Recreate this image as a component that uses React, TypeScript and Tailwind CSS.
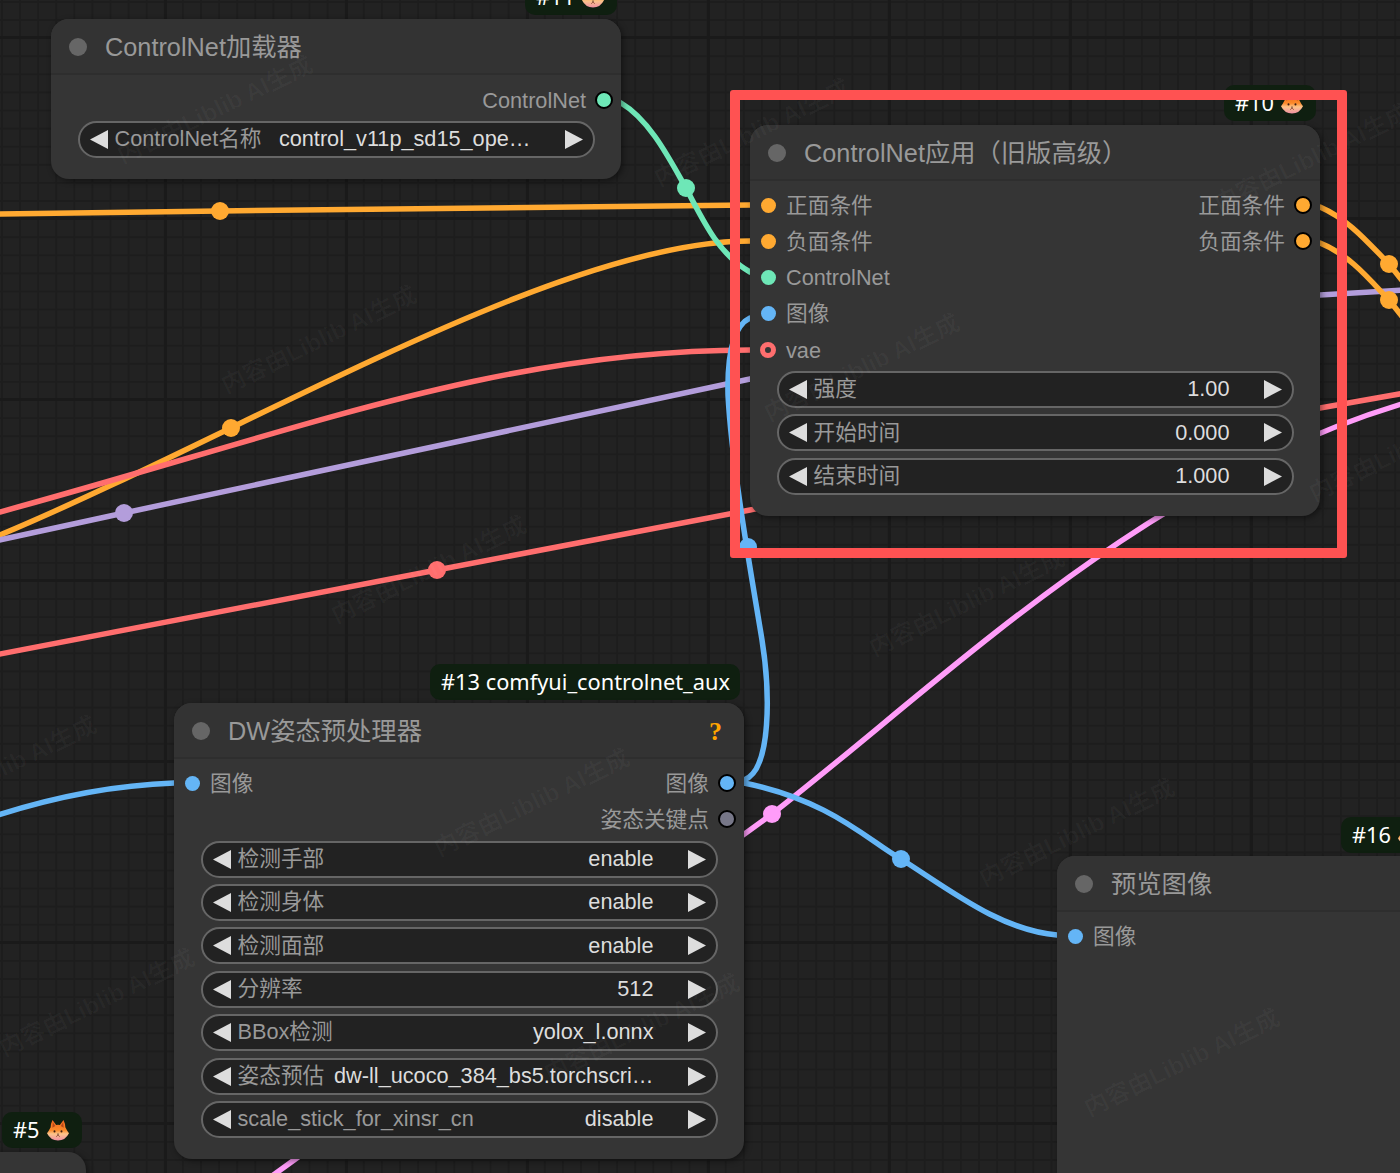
const sans = "font-['Liberation_Sans','Noto_Sans_CJK_SC',sans-serif]"
const noto = "font-['Noto_Sans','Noto_Sans_CJK_SC',sans-serif]"

function Fox({ className }: { className: string }) {
  return (
    <svg viewBox="0 0 24 24" className={className}>
      <defs>
        <linearGradient id="foxFace" x1="0" y1="0" x2="0" y2="1">
          <stop offset="0" stopColor="#f0661e" />
          <stop offset="0.5" stopColor="#fb8a2a" />
          <stop offset="0.68" stopColor="#fcc48a" />
          <stop offset="1" stopColor="#ef8fa4" />
        </linearGradient>
      </defs>
      <path d="M6 1 L10 6.5 Q12 6 14 6.5 L18 1 Q20 5 20 9 Q22 13 24 15.5 Q20 23.5 12 23.5 Q4 23.5 0 15.5 Q2 13 4 9 Q4 5 6 1 Z" fill="url(#foxFace)" />
      <path d="M6.4 3.5 L9 7.5 L5.8 9.5 Z M17.6 3.5 L15 7.5 L18.2 9.5 Z" fill="#b8481a" />
      <circle cx="8.2" cy="13.5" r="1.1" fill="#3b1d12" />
      <circle cx="15.8" cy="13.5" r="1.1" fill="#3b1d12" />
      <path d="M10.8 16.2 H13.2 L12 17.4 Z" fill="#3b1d12" />
      <path d="M10 19.3 L12 17.6 L14 19.3" stroke="#7a3a2a" strokeWidth="0.8" fill="none" />
    </svg>
  )
}

function Arrow({ right }: { right?: boolean }) {
  return (
    <svg viewBox="0 0 18 19" className="w-[18px] h-[19px] shrink-0">
      <polygon points={right ? '0,0 18,9.5 0,19' : '18,0 0,9.5 18,19'} fill="#ddd" />
    </svg>
  )
}

function Widget({ label, value, gap }: { label: string; value: string; gap?: boolean }) {
  return (
    <div className="flex items-center h-[37px] rounded-full border-2 border-[#666] bg-[#222] pl-[10px] pr-[10px] text-[21.7px] whitespace-nowrap">
      <Arrow />
      <span className="ml-[7px] text-[#999]">{label}</span>
      <span className={`flex-1 text-right text-[#ddd] mr-[34px] ${gap ? 'ml-[9px]' : ''}`}>{value}</span>
      <Arrow right />
    </div>
  )
}

function Dot({ color, output, ring }: { color: string; output?: boolean; ring?: boolean }) {
  if (ring) {
    return (
      <div className={`w-[16px] h-[16px] rounded-full border-[5px] ${color} bg-[#353535] shrink-0`} />
    )
  }
  return (
    <div className={`rounded-full shrink-0 ${color} ${output ? 'w-[18px] h-[18px] border-2 border-black' : 'w-[15px] h-[15px]'}`} />
  )
}

function Input({ color, label, ring }: { color: string; label: string; ring?: boolean }) {
  return (
    <div className="flex items-center h-[36.2px] pl-[10px]">
      <div className="w-[16px] flex justify-center">
        <Dot color={color} ring={ring} />
      </div>
      <span className="ml-[11px] pt-[2px] -translate-x-[1px] text-[21.7px] text-[#999]">{label}</span>
    </div>
  )
}

function Output({ color, label }: { color: string; label: string }) {
  return (
    <div className="flex items-center justify-end h-[36.2px] pr-[8px]">
      <span className="mr-[9px] pt-[2px] text-[21.7px] text-[#999]">{label}</span>
      <div className="w-[18px] flex justify-center">
        <Dot color={color} output />
      </div>
    </div>
  )
}

function Title({ text, help }: { text: string; help?: boolean }) {
  return (
    <div className="flex items-center h-[56px] shrink-0 pt-[2px] pl-[18px] pr-[22px] bg-[#333] border-b-2 border-[#2e2e2e] rounded-t-[18px]">
      <div className="w-[18px] h-[18px] rounded-full bg-[#666]" />
      <span className="ml-[18px] pt-[2px] text-[25.3px] text-[#999] whitespace-nowrap">{text}</span>
      {help && <span className="ml-auto font-['Liberation_Serif',serif] font-bold text-[26px] text-[#ffa500]">?</span>}
    </div>
  )
}

function Badge({ className, text, fox }: { className: string; text: string; fox?: string }) {
  return (
    <div className={`absolute flex items-center gap-[7px] h-[36px] rounded-[10px] bg-[#0f1f10] text-white text-[21.8px] whitespace-nowrap ${noto} ${className}`}>
      <span>{text}</span>
      {fox && <Fox className={fox} />}
    </div>
  )
}

const watermarks = [
  'left-[108px] top-[92px]',
  'left-[212px] top-[322px]',
  'left-[322px] top-[552px]',
  'left-[-108px] top-[752px]',
  'left-[860px] top-[585px]',
  'left-[755px] top-[350px]',
  'left-[645px] top-[115px]',
  'left-[1205px] top-[140px]',
  'left-[425px] top-[785px]',
  'left-[970px] top-[815px]',
  'left-[-10px] top-[985px]',
  'left-[535px] top-[1010px]',
  'left-[1075px] top-[1045px]',
  'left-[1300px] top-[430px]',
]

function Wires() {
  const w = { fill: 'none', strokeWidth: 5.5, strokeLinecap: 'round' as const }
  return (
    <svg viewBox="0 0 1400 1173" className="absolute inset-0 w-[1400px] h-[1173px]">
      <path {...w} stroke="#FFA931" d="M-5,214 L220,211 L750,205" />
      <path {...w} stroke="#FFA931" d="M0,535 C250,430 560,241 750,241" />
      <path {...w} stroke="#FF6E6E" d="M0,512 C300,430 500,350 750,350" />
      <path {...w} stroke="#B39DDB" d="M-5,541 L124,513 L750,379 C950,340 1150,300 1320,295 L1405,290" />
      <path {...w} stroke="#FF6E6E" d="M-5,655 L437,570 L750,510 C950,470 1150,435 1320,408 L1405,393" />
      <path {...w} stroke="#FF9CF9" d="M272,1176 L772,814 C950,675 1145,480 1405,403" />
      <path {...w} stroke="#64B5F6" d="M744,780 C772,770 770,690 762,640 S732,470 728,395 C727,350 735,325 750,318" />
      <path {...w} stroke="#64B5F6" d="M744,783 C830,800 870,842 901,859 C950,890 1000,930 1057,935" />
      <path {...w} stroke="#64B5F6" d="M-5,816 C60,795 120,785 174,783" />
      <path {...w} stroke="#6EE7B7" d="M621,103 C650,120 670,160 686,188 C705,225 720,255 750,272" />
      <path {...w} stroke="#FFA931" d="M1320,207 C1350,220 1370,245 1389,264 L1405,284" />
      <path {...w} stroke="#FFA931" d="M1320,243 C1350,255 1370,280 1389,300 L1405,320" />
      <circle cx="220" cy="211" r="9" fill="#FFA931" />
      <circle cx="231" cy="428" r="9" fill="#FFA931" />
      <circle cx="124" cy="513" r="9" fill="#B39DDB" />
      <circle cx="437" cy="570" r="9" fill="#FF6E6E" />
      <circle cx="686" cy="188" r="9" fill="#6EE7B7" />
      <circle cx="748" cy="547" r="9" fill="#64B5F6" />
      <circle cx="772" cy="814" r="9" fill="#FF9CF9" />
      <circle cx="901" cy="859" r="9" fill="#64B5F6" />
      <circle cx="1389" cy="264" r="9" fill="#FFA931" />
      <circle cx="1389" cy="300" r="9" fill="#FFA931" />
    </svg>
  )
}

const nodeClass = 'absolute flex flex-col bg-[#353535] rounded-[18px] shadow-[2px_2px_6px_rgba(0,0,0,0.45)]'

export default function App() {
  return (
    <div className={`relative w-[1400px] h-[1173px] overflow-hidden bg-[#222] ${sans} [background-image:linear-gradient(to_right,#1a1a1a_3px,transparent_3px),linear-gradient(to_bottom,#1a1a1a_3px,transparent_3px),linear-gradient(to_right,#1d1d1d_2px,transparent_2px),linear-gradient(to_bottom,#1d1d1d_2px,transparent_2px)] [background-size:181px_181px,181px_181px,18.1px_18.1px,18.1px_18.1px] [background-position:164px_0,0_36px,1px_0,0_1px]`}>
      <Wires />

      <Badge className="left-[525px] top-[-21px] w-[92px] pl-[11px]" text="#11" fox="w-[22px] h-[22px]" />
      <Badge className="left-[1224px] top-[85px] w-[92px] pl-[11px]" text="#10" fox="w-[22px] h-[22px]" />
      <Badge className="left-[430px] top-[664px] w-[310px] pl-[11px]" text="#13 comfyui_controlnet_aux" />
      <Badge className="left-[2px] top-[1112px] w-[80px] pl-[11px]" text="#5" fox="w-[22px] h-[22px]" />
      <Badge className="left-[1341px] top-[817px] w-[92px] pl-[11px]" text="#16" fox="w-[22px] h-[22px]" />

      {/* ControlNet loader */}
      <div className={`${nodeClass} left-[51px] top-[19px] w-[570px] h-[160px]`}>
        <Title text="ControlNet加载器" />
        <div className="pt-[7px]">
          <Output color="bg-[#6EE7B7]" label="ControlNet" />
        </div>
        <div className="mt-[3px] mx-[26.5px]">
          <Widget label="ControlNet名称" value="control_v11p_sd15_ope…" />
        </div>
      </div>

      {/* ControlNet apply */}
      <div className={`${nodeClass} left-[750px] top-[125px] w-[570px] h-[391px]`}>
        <Title text="ControlNet应用（旧版高级）" />
        <div className="flex justify-between pt-[6px]">
          <div className="flex flex-col">
            <Input color="bg-[#FFA931]" label="正面条件" />
            <Input color="bg-[#FFA931]" label="负面条件" />
            <Input color="bg-[#6EE7B7]" label="ControlNet" />
            <Input color="bg-[#64B5F6]" label="图像" />
            <Input color="border-[#FF6E6E]" label="vae" ring />
          </div>
          <div className="flex flex-col">
            <Output color="bg-[#FFA931]" label="正面条件" />
            <Output color="bg-[#FFA931]" label="负面条件" />
          </div>
        </div>
        <div className="flex flex-col gap-[6.4px] mt-[3px] mx-[26.5px]">
          <Widget label="强度" value="1.00" />
          <Widget label="开始时间" value="0.000" />
          <Widget label="结束时间" value="1.000" />
        </div>
      </div>

      {/* DW pose */}
      <div className={`${nodeClass} left-[174px] top-[703px] w-[570px] h-[456px]`}>
        <Title text="DW姿态预处理器" help />
        <div className="flex justify-between pt-[6px]">
          <div className="flex flex-col">
            <Input color="bg-[#64B5F6]" label="图像" />
          </div>
          <div className="flex flex-col">
            <Output color="bg-[#64B5F6]" label="图像" />
            <Output color="bg-[#777788]" label="姿态关键点" />
          </div>
        </div>
        <div className="flex flex-col gap-[6.4px] mt-[3.3px] mx-[26.5px]">
          <Widget label="检测手部" value="enable" />
          <Widget label="检测身体" value="enable" />
          <Widget label="检测面部" value="enable" />
          <Widget label="分辨率" value="512" />
          <Widget label="BBox检测" value="yolox_l.onnx" />
          <Widget label="姿态预估" value="dw-ll_ucoco_384_bs5.torchscri…" gap />
          <Widget label="scale_stick_for_xinsr_cn" value="disable" />
        </div>
      </div>

      {/* Preview image */}
      <div className={`${nodeClass} left-[1057px] top-[856px] w-[500px] h-[400px]`}>
        <Title text="预览图像" />
        <div className="pt-[6px]">
          <Input color="bg-[#64B5F6]" label="图像" />
        </div>
      </div>

      <div className={`${nodeClass} left-[-100px] top-[1152px] w-[186px] h-[100px]`} />

      {watermarks.map((pos) => (
        <div key={pos} className={`absolute ${pos} -rotate-[26deg] text-[24px] font-bold text-white/[0.03] whitespace-nowrap`}>
          内容由Liblib AI生成
        </div>
      ))}

      <div className="absolute left-[730px] top-[90px] w-[617px] h-[468px] border-[10px] border-[#FF5252] rounded-[3px]" />
    </div>
  )
}
